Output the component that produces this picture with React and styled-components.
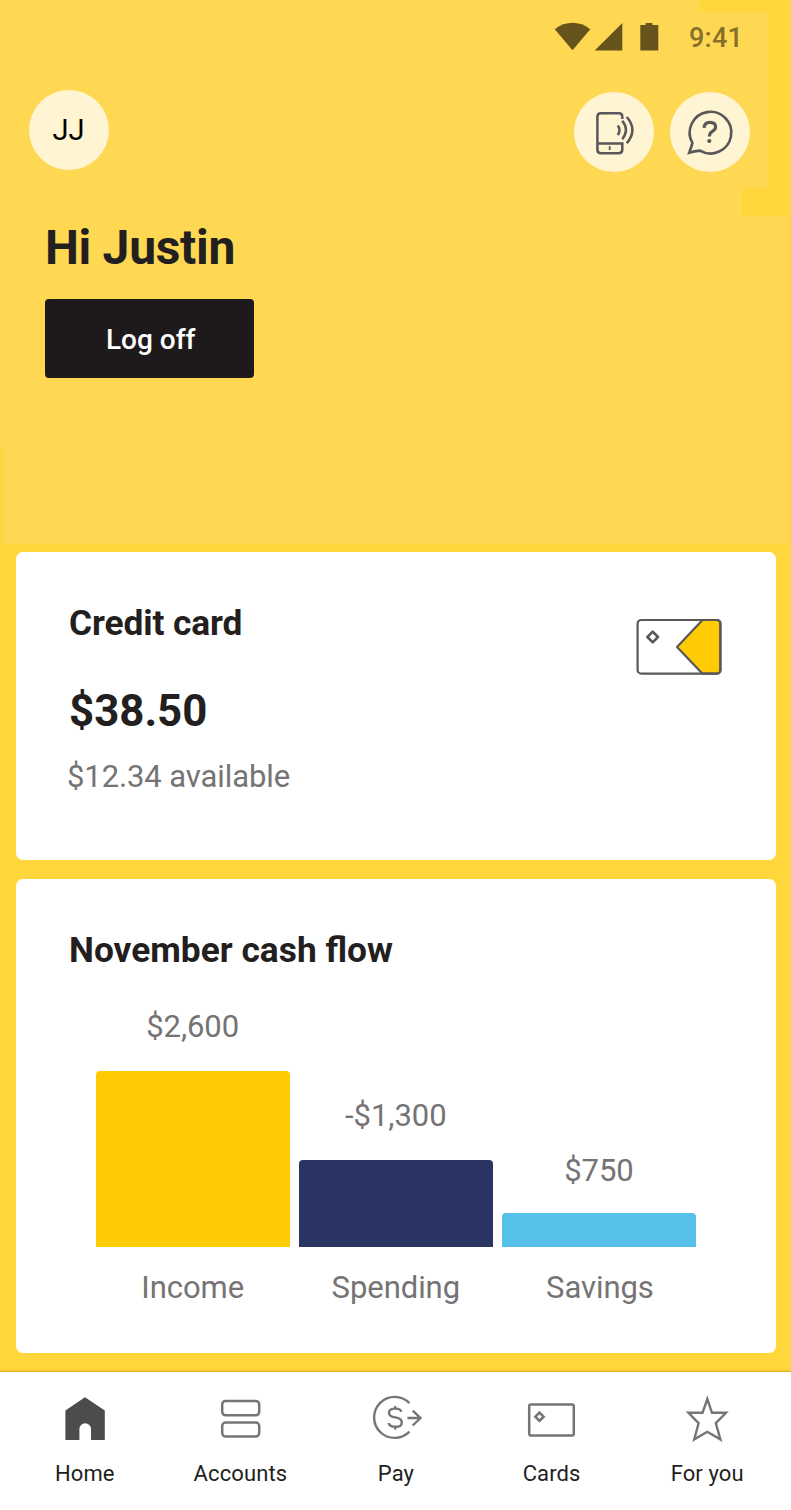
import React from 'react'
import styled, { createGlobalStyle, ThemeProvider } from 'styled-components'

const theme = {
  yellow: { main: '#ffcc03', page: '#ffd63b', hero: '#ffd853', pale: '#fff5d2' },
  ink: { main: '#231f20', soft: '#767374', icon: '#59575a' },
}

const GlobalStyle = createGlobalStyle`
  * {
    box-sizing: border-box;
  }

  body {
    margin: 0;
    background: ${({ theme }) => theme.yellow.page};
    font-family: Roboto, 'Liberation Sans', sans-serif;
    color: ${({ theme }) => theme.ink.main};
  }

  p,
  h1,
  h2 {
    margin: 0;
  }

  svg {
    display: block;
    flex: none;
  }
`

const Screen = styled.div`
  display: flex;
  flex-direction: column;
  width: 791px;
  height: 1510px;
  overflow: hidden;
`

/* the hero has stepped edges in the darker page yellow */
const Hero = styled.header`
  height: 544px;
  flex: none;
  background-color: ${({ theme }) => theme.yellow.hero};
  background-image: ${({ theme }) =>
    Array(5)
      .fill(`linear-gradient(${theme.yellow.page}, ${theme.yellow.page})`)
      .join(', ')};
  background-repeat: no-repeat;
  background-position: 700px 0, 768px 12px, 742px 188px, 788px 216px, 0 447px;
  background-size: 91px 12px, 23px 176px, 49px 28px, 3px 328px, 3px 97px;
`

const StatusBar = styled.div`
  display: flex;
  justify-content: flex-end;
  align-items: center;
  height: 74px;
  padding-right: 48px;
  color: #67531c;
`

const Clock = styled.p`
  margin-left: 29px;
  padding-top: 1px;
  font-size: 27px;
  line-height: 74px;
  font-weight: 500;
  letter-spacing: 0.2px;
  color: #87702a;
`

const TopBar = styled.div`
  display: flex;
  align-items: flex-start;
  height: 96px;
  padding: 16px 41.5px 0 28.5px;
`

const Round = styled.div`
  display: flex;
  align-items: center;
  justify-content: center;
  width: 80px;
  height: 80px;
  border-radius: 50%;
  background: ${({ theme }) => theme.yellow.pale};
  color: #000;
  font-size: 29px;
`

const Actions = styled.div`
  display: flex;
  gap: 15.5px;
  margin: 2px 0 0 auto;
`

const Greeting = styled.h1`
  margin: 48px 0 0 45px;
  font-size: 48px;
  line-height: 60px;
  font-weight: 700;
  letter-spacing: -0.3px;
`

const LogOff = styled.button`
  display: block;
  width: 209px;
  height: 79px;
  margin: 21.4px 0 0 44.7px;
  padding: 2px 0 0 3px;
  border: 0;
  border-radius: 4px;
  background: #1e1a1b;
  color: #fff;
  font: 500 28px/77px Roboto, sans-serif;
`

const Cards = styled.main`
  display: flex;
  flex-direction: column;
  gap: 19px;
  padding: 8px 15px 0 16px;
  height: 827.5px;
  flex: none;
`

const Card = styled.section`
  display: flex;
  height: ${({ height }) => `${height}px`};
  padding: 0 54px 0 53px;
  border-radius: 7px;
  background: #fff;
  flex-direction: ${({ column }) => (column ? 'column' : 'row')};
  justify-content: space-between;
`

const CardTitle = styled.h2`
  padding-top: 51px;
  font-size: 35.3px;
  line-height: 41px;
  font-weight: 700;
  letter-spacing: ${({ spacing }) => spacing};
`

const Balance = styled.p`
  margin-top: 42px;
  font-size: 43.8px;
  line-height: 50px;
  font-weight: 700;
`

const Available = styled.p`
  margin: 21px 0 0 -2px;
  font-size: 31px;
  line-height: 40px;
  letter-spacing: -0.1px;
  color: ${({ theme }) => theme.ink.soft};
`

const CardPicture = styled.div`
  padding-top: 65.5px;
`

const Chart = styled.div`
  display: flex;
  align-items: flex-end;
  gap: 9px;
  margin: 0 26px 45px 26.6px;
`

const Column = styled.div`
  width: 194.4px;
  text-align: center;
  font-size: 31px;
  line-height: 40px;
  letter-spacing: -0.05px;
  color: ${({ theme }) => theme.ink.soft};
`

const Bar = styled.div`
  margin: ${({ gap }) => `${gap}px`} 0 21px;
  border-radius: 4px 4px 0 0;
  background: ${({ color }) => color};
`

const FlowLabel = styled.p`
  padding-left: ${({ indent }) => `${indent}px`};
`

const Nav = styled.nav`
  display: flex;
  flex: 1;
  padding: 20.5px 6px 0 7px;
  background: #fff;
  box-shadow: 0 -1px 2px rgba(90, 70, 0, 0.3);
`

const NavItem = styled.div`
  display: flex;
  flex: 1;
  flex-direction: column;
  align-items: center;
  color: ${({ active }) => (active ? '#4e4b4c' : '#777475')};
`

const NavLabel = styled.p`
  margin-top: 16px;
  font-size: 22px;
  line-height: 28px;
  letter-spacing: 0.1px;
  color: ${({ theme }) => theme.ink.main};
`

const StatusIcons = () => (
  <svg width="106" height="30" viewBox="554 22 106 30" fill="currentColor">
    <path d="M554.7 29.2 Q572.5 16.5 590.3 29.2 L572.5 50.3 Z" />
    <path d="M594.7 50.6 L622.3 23 V50.6 Z" />
    <path d="M640.3 25 H645.6 V23 H652.4 V25 H658.3 V50.6 H640.3 Z" />
  </svg>
)

const TapPhoneIcon = () => (
  <svg width="80" height="80" viewBox="574 92 80 80" fill="none" stroke="#59575a" strokeWidth="2.5">
    <path d="M622.3 119 V116.6 Q622.3 113.3 619 113.3 H601 Q597.4 113.3 597.4 117 V149.5 Q597.4 153.2 601 153.2 H618.7 Q622.3 153.2 622.3 149.5 V143.4 H597.4 M622.3 142.5 V144" />
    <path d="M609.7 146.2 V150" strokeWidth="1.8" />
    <path d="M617.8 125.4 Q621.3 130 617.8 135 M622.3 120.8 Q629.6 130 622.3 139.2 M626.8 117 Q638 130 626.8 143.2" />
  </svg>
)

const HelpIcon = () => (
  <svg width="80" height="80" viewBox="670.2 92 80 80" fill="none" stroke="#59575a" strokeWidth="2.6">
    <path
      d="M692.6 142.9 A20.8 20.8 0 1 1 700.2 150.6 Q695 151.2 689.4 152.7 Q691.5 147.5 692.6 142.9 Z"
      strokeLinejoin="miter"
    />
    <path d="M704.3 127.8 Q704.6 122.4 710 122.4 Q715.8 122.4 715.8 127 Q715.8 129.6 712.6 131.4 Q709.6 133.2 709.6 136.4" strokeWidth="3.1" />
    <circle cx="709.5" cy="141" r="2.1" fill="#59575a" stroke="none" />
  </svg>
)

const CreditCardIcon = () => (
  <svg width="86" height="58" viewBox="636 617.5 86 58" fill="none" stroke="#59575a" strokeWidth="2.2" strokeLinejoin="round">
    <path d="M702.5 619.5 H716.5 Q720.4 619.5 720.4 623 V669.5 Q720.4 673.2 716.5 673.2 H702.5 L677 646.6 Z" fill="#ffcc03" />
    <rect x="637.6" y="619.5" width="82.8" height="53.7" rx="3.8" />
    <path d="M652.7 631.2 L658 636.5 L652.7 641.8 L647.4 636.5 Z" strokeWidth="2.6" />
  </svg>
)

const HomeIcon = () => (
  <svg width="52" height="52" viewBox="0 0 52 52" fill="currentColor">
    <path d="M26 5.2 L45.8 18.6 V48 H32 V37 A5.8 5.8 0 0 0 20.4 37 V48 H6.4 V18.6 Z" />
  </svg>
)

const AccountsIcon = () => (
  <svg width="52" height="52" viewBox="0 0 52 52" fill="none" stroke="currentColor" strokeWidth="2.5">
    <rect x="8.2" y="8.9" width="37" height="14.4" rx="3.5" />
    <rect x="8.2" y="30.6" width="37" height="14" rx="3.5" />
  </svg>
)

const PayIcon = () => (
  <svg width="52" height="52" viewBox="0 0 52 52" fill="none" stroke="currentColor" strokeWidth="2.4">
    <path d="M39.4 11.2 A20.5 20.5 0 1 0 39.4 39.6" />
    <path d="M31.4 19.8 Q30.5 16.6 25.3 16.6 Q19 16.6 19 20.8 Q19 24.6 25 25.4 Q31.8 26.3 31.8 30.4 Q31.8 34.8 25.3 34.8 Q19.3 34.8 18.6 31 M25.2 14 V17 M25.2 34.8 V37.6" />
    <path d="M37.4 26 H51 M42.7 18.7 L50.6 26 L42.7 33.5" />
  </svg>
)

const CardsIcon = () => (
  <svg width="52" height="52" viewBox="0 0 52 52" fill="none" stroke="currentColor" strokeWidth="2.5">
    <rect x="3.2" y="12.6" width="44.6" height="31" rx="1.8" />
    <path d="M13.5 20.6 L17.6 24.7 L13.5 28.8 L9.4 24.7 Z" strokeWidth="2.6" />
  </svg>
)

const StarIcon = () => (
  <svg width="52" height="52" viewBox="0 0 52 52" fill="none" stroke="currentColor" strokeWidth="2.4">
    <path d="M26.3 7 L31 20.8 H45 L34.8 31.2 L39.4 47.4 L26.3 39.8 L13.2 47.4 L17.6 31.2 L7.4 20.8 H21.5 Z" />
  </svg>
)

const flows = [
  { label: 'Income', value: '$2,600', height: 176, color: '#ffcc03', gap: 24, indent: 0 },
  { label: 'Spending', value: '-$1,300', height: 87, color: '#293463', gap: 24, indent: 0 },
  { label: 'Savings', value: '$750', height: 34, color: '#55c1e8', gap: 22, indent: 2 },
]

const tabs = [
  { label: 'Home', Icon: HomeIcon, active: true },
  { label: 'Accounts', Icon: AccountsIcon },
  { label: 'Pay', Icon: PayIcon },
  { label: 'Cards', Icon: CardsIcon },
  { label: 'For you', Icon: StarIcon },
]

const App = () => (
  <ThemeProvider theme={theme}>
    <GlobalStyle />
    <Screen>
      <Hero>
        <StatusBar>
          <StatusIcons />
          <Clock>9:41</Clock>
        </StatusBar>
        <TopBar>
          <Round>JJ</Round>
          <Actions>
            <Round>
              <TapPhoneIcon />
            </Round>
            <Round>
              <HelpIcon />
            </Round>
          </Actions>
        </TopBar>
        <Greeting>Hi Justin</Greeting>
        <LogOff>Log off</LogOff>
      </Hero>
      <Cards>
        <Card height={308}>
          <div>
            <CardTitle spacing="-0.1px">Credit card</CardTitle>
            <Balance>$38.50</Balance>
            <Available>$12.34 available</Available>
          </div>
          <CardPicture>
            <CreditCardIcon />
          </CardPicture>
        </Card>
        <Card height={474} column>
          <CardTitle spacing="normal">November cash flow</CardTitle>
          <Chart>
            {flows.map(({ label, value, height, color, gap, indent }) => (
              <Column key={label}>
                <p>{value}</p>
                <Bar color={color} gap={gap} style={{ height }} />
                <FlowLabel indent={indent}>{label}</FlowLabel>
              </Column>
            ))}
          </Chart>
        </Card>
      </Cards>
      <Nav>
        {tabs.map(({ label, Icon, active }) => (
          <NavItem key={label} active={active}>
            <Icon />
            <NavLabel>{label}</NavLabel>
          </NavItem>
        ))}
      </Nav>
    </Screen>
  </ThemeProvider>
)

export default App
